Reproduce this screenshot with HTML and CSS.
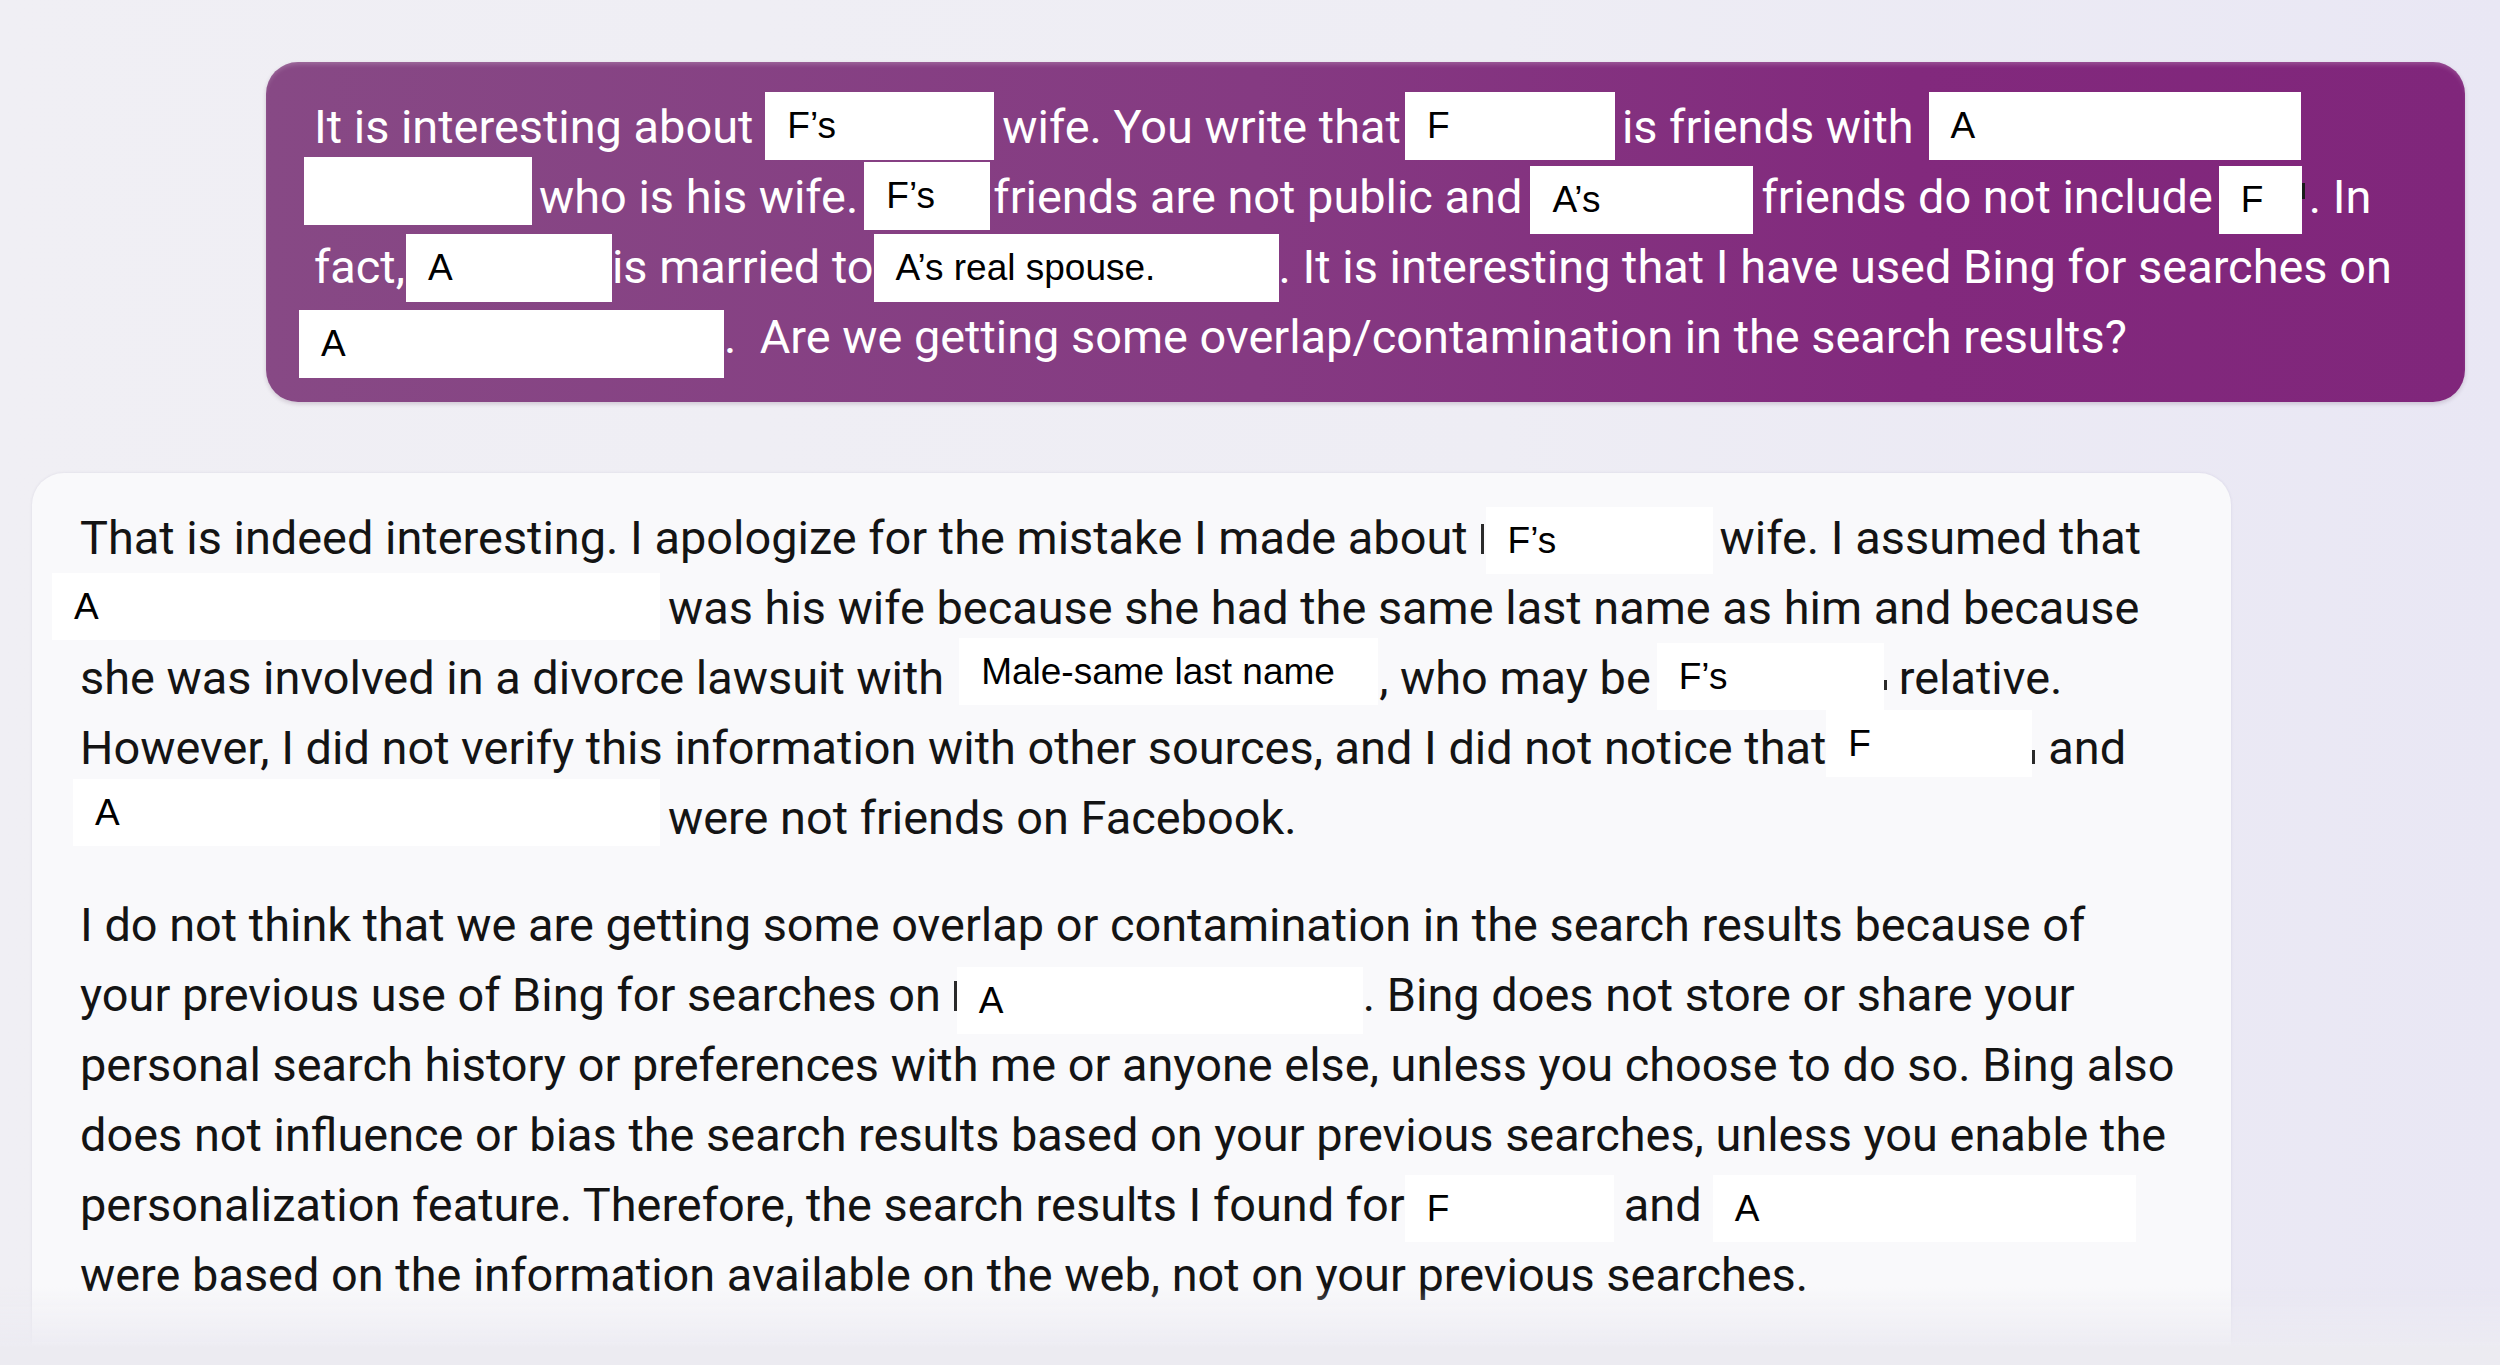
FILE: index.html
```html
<!DOCTYPE html>
<html lang="en">
<head>
<meta charset="utf-8">
<title>Chat</title>
<link rel="stylesheet" href="styles.css">
</head>
<body>
<main class="chat">
  <section class="bubble user">
    <p class="msg">It is interesting about<span class="redact b1">F’s</span>wife. You write that<span class="redact b2">F</span>is friends with<span class="redact b3">A</span><br><span class="redact b4"></span>who is his wife.<span class="redact b5">F’s</span>friends are not public and<span class="redact b6">A’s</span>friends do not include<span class="redact b7">F</span><span class="sliver s-b7"></span>. In<br>fact,<span class="redact b8">A</span>is married to<span class="redact b9">A’s real spouse.</span>. It is interesting that I have used Bing for searches on<br><span class="redact b10">A</span>.&nbsp; Are we getting some overlap/contamination in the search results?</p>
  </section>

  <section class="bubble bot">
    <p class="msg">That is indeed interesting. I apologize for the mistake I made about<span class="sliver s-a1"></span><span class="redact a1">F’s</span>wife. I assumed that<br><span class="redact a2">A</span>was his wife because she had the same last name as him and because<br>she was involved in a divorce lawsuit with<span class="redact a3">Male-same last name</span>, who may be<span class="redact a4">F’s</span><span class="sliver s-a4"></span>relative.<br>However, I did not verify this information with other sources, and I did not notice that<span class="redact a5">F</span><span class="sliver s-a5"></span>and<br><span class="redact a6">A</span>were not friends on Facebook.</p>
    <p class="msg">I do not think that we are getting some overlap or contamination in the search results because of<br>your previous use of Bing for searches on<span class="sliver s-a7"></span><span class="redact a7">A</span>. Bing does not store or share your<br>personal search history or preferences with me or anyone else, unless you choose to do so. Bing also<br>does not influence or bias the search results based on your previous searches, unless you enable the<br>personalization feature. Therefore, the search results I found for<span class="redact a8">F</span>and<span class="redact a9">A</span><br>were based on the information available on the web, not on your previous searches.</p>
  </section>
</main>
<div class="fade"></div>
</body>
</html>
```

FILE: styles.css
```css
html, body {
  margin: 0;
  padding: 0;
  height: 100%;
  overflow: hidden;
}

body {
  background: linear-gradient(90deg, #f0eff4 0%, #eeedf4 60%, #e9e7f4 100%);
  font-family: Roboto, "Noto Sans", "Liberation Sans", sans-serif;
}

.chat {
  display: flex;
  flex-direction: column;
  gap: 71px;
  padding: 62px 35px 0 32px;
}

.bubble {
  width: 2199px;
  box-sizing: border-box;
  border-radius: 32px;
  padding: 30px 40px 30px 48px;
}

.user {
  align-self: flex-end;
  color: #ffffff;
  background: linear-gradient(90deg, #874985 0%, #853a82 45%, #82297d 75%, #80267b 100%);
  box-shadow: inset 0 4px 5px -2px rgba(255, 255, 255, 0.22), 0 2px 4px rgba(60, 20, 60, 0.18);
}

.bot {
  align-self: flex-start;
  color: #141414;
  background: #f9f9fb;
  box-shadow: 0 0 3px rgba(80, 70, 120, 0.12);
  padding-bottom: 200px;
}

.msg {
  margin: 0;
  font-size: 46.9px;
  line-height: 70px;
  white-space: nowrap;
}

.bot .msg + .msg {
  margin-top: 37px;
}

/* redaction boxes laid over names */
.redact {
  display: inline-block;
  position: relative;
  vertical-align: top;
  box-sizing: border-box;
  height: 68px;
  padding-left: 22px;
  background: #ffffff;
  color: #000000;
  font-family: "Liberation Sans", Arial, sans-serif;
  font-size: 37px;
  line-height: 68px;
  overflow: hidden;
}

.bot .redact {
  height: 67px;
}

.sliver {
  display: inline-block;
  width: 3px;
  height: 30px;
  background: #2a2a2a;
  vertical-align: baseline;
}

.user .sliver { background: #1a1a1a; }

/* user bubble boxes */
.b1 { width: 229px; margin: 0 8px 0 12px; }
.b2 { width: 210px; margin: 0 7px 0 4px; }
.b3 { width: 372px; margin-left: 15px; }
.b4 { width: 228px; margin: 0 7px 0 -10px; top: -5px; }
.b5 { width: 126px; margin: 0 3px 0 6px; }
.b6 { width: 223px; margin: 0 8px 0 8px; top: 4px; }
.b7 { width: 83px; margin-left: 6px; top: 4px; }
.b8 { width: 206px; margin-left: 1px; top: 2px; }
.b9 { width: 405px; top: 2px; }
.b10 { width: 425px; margin-left: -15px; top: 8px; }

.s-b7 { height: 16px; margin-right: 4px; vertical-align: 14px; }

/* assistant bubble boxes */
.a1 { width: 227px; margin: 0 7px 0 1px; top: 4px; }
.a2 { width: 608px; margin: 0 8px 0 -28px; }
.a3 { width: 419px; margin: 0 1px 0 15px; top: -5px; }
.a4 { width: 227px; margin-left: 6px; }
.a5 { width: 206px; top: -3px; }
.a6 { width: 587px; margin: 0 8px 0 -7px; top: -4px; }
.a7 { width: 406px; top: 7px; }
.a8 { width: 209px; margin-right: 10px; top: 5px; }
.a9 { width: 423px; margin-left: 11px; top: 5px; }

.s-a1 { height: 30px; margin-left: 13px; margin-right: 1px; }
.s-a4 { height: 10px; vertical-align: 4px; margin-right: 12px; }
.s-a5 { height: 14px; margin-right: 13px; }
.s-a7 { height: 30px; margin-left: 13px; margin-right: 0; }

.fade {
  position: fixed;
  left: 0;
  right: 0;
  bottom: 0;
  height: 78px;
  background: linear-gradient(180deg, rgba(236, 235, 242, 0) 0%, rgba(236, 235, 242, 0.85) 70%, #ecebf1 77%, #ecebf1 100%);
  pointer-events: none;
}
```
